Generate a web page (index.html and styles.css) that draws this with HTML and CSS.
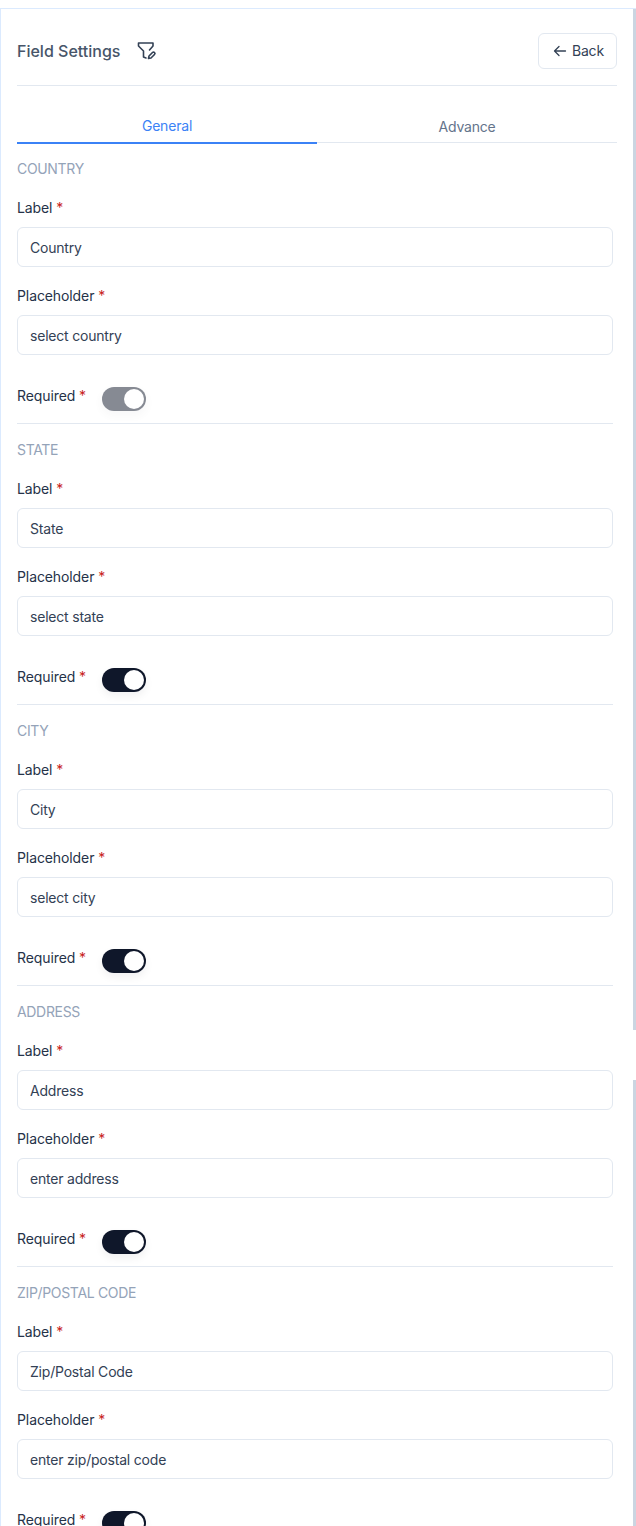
FILE: index.html
```html
<!DOCTYPE html>
<html lang="en">
<head>
    <meta charset="UTF-8">
    <title>Field Settings</title>
    <link rel="stylesheet" href="styles.css">
</head>
<body>
<div class="panel">
    <header class="panel-header">
        <div class="panel-title">
            <h2>Field Settings</h2>
            <svg class="filter-icon" width="20" height="20" viewBox="0 0 20 20" fill="none" stroke="#334155" stroke-width="1.6" stroke-linecap="round" stroke-linejoin="round">
                <path d="M9 17l-2.500-1v-6L1.500 5V2h14.500v3l-3.500 4"/>
                <path d="M11.500 17.500l.5-2.500 3.500-3.500a1.400 1.400 0 0 1 2 2L14 17z"/>
            </svg>
        </div>
        <button class="back-btn">
            <svg width="14" height="14" viewBox="0 0 14 14" fill="none" stroke="#334155" stroke-width="1.3" stroke-linecap="round" stroke-linejoin="round">
                <path d="M12.500 7h-11M6 2.500L1.500 7 6 11.500"/>
            </svg>
            Back
        </button>
    </header>

    <div class="tabs">
        <div class="tab active">General</div>
        <div class="tab">Advance</div>
    </div>

    <section class="field-group">
        <div class="group-name">COUNTRY</div>
        <label class="field-label">Label <span class="req">*</span></label>
        <input class="field-input" type="text" value="Country">
        <label class="field-label second">Placeholder <span class="req">*</span></label>
        <input class="field-input" type="text" value="select country">
        <div class="required-row">
            <span class="field-label">Required <span class="req">*</span></span>
            <span class="toggle disabled"><span class="knob"></span></span>
        </div>
    </section>

    <section class="field-group">
        <div class="group-name">STATE</div>
        <label class="field-label">Label <span class="req">*</span></label>
        <input class="field-input" type="text" value="State">
        <label class="field-label second">Placeholder <span class="req">*</span></label>
        <input class="field-input" type="text" value="select state">
        <div class="required-row">
            <span class="field-label">Required <span class="req">*</span></span>
            <span class="toggle"><span class="knob"></span></span>
        </div>
    </section>

    <section class="field-group">
        <div class="group-name">CITY</div>
        <label class="field-label">Label <span class="req">*</span></label>
        <input class="field-input" type="text" value="City">
        <label class="field-label second">Placeholder <span class="req">*</span></label>
        <input class="field-input" type="text" value="select city">
        <div class="required-row">
            <span class="field-label">Required <span class="req">*</span></span>
            <span class="toggle"><span class="knob"></span></span>
        </div>
    </section>

    <section class="field-group">
        <div class="group-name">ADDRESS</div>
        <label class="field-label">Label <span class="req">*</span></label>
        <input class="field-input" type="text" value="Address">
        <label class="field-label second">Placeholder <span class="req">*</span></label>
        <input class="field-input" type="text" value="enter address">
        <div class="required-row">
            <span class="field-label">Required <span class="req">*</span></span>
            <span class="toggle"><span class="knob"></span></span>
        </div>
    </section>

    <section class="field-group">
        <div class="group-name">ZIP/POSTAL CODE</div>
        <label class="field-label">Label <span class="req">*</span></label>
        <input class="field-input" type="text" value="Zip/Postal Code">
        <label class="field-label second">Placeholder <span class="req">*</span></label>
        <input class="field-input" type="text" value="enter zip/postal code">
        <div class="required-row">
            <span class="field-label">Required <span class="req">*</span></span>
            <span class="toggle"><span class="knob"></span></span>
        </div>
    </section>
</div>

<!-- scrollbar thumbs over the panel edge -->
<div class="scroll-thumb upper"></div>
<div class="scroll-thumb lower"></div>
</body>
</html>
```

FILE: styles.css
```css
html, body {
    height: 1526px;
    overflow: hidden;
}
body {
    font-family: Inter, "Liberation Sans", sans-serif;
    font-size: 14px;
    line-height: 20px;
    letter-spacing: -0.2px;
    margin: 0;
    padding: 0;
    background-color: #fff;
    color: #334155;
    position: relative;
}
.panel {
    margin-top: 8px;
    border-top: 1px solid #dbeafe;
    border-left: 1px solid #dbeafe;
    padding: 24px 19px 0 16px;
}
.panel-header {
    display: flex;
    justify-content: space-between;
    align-items: center;
    padding-bottom: 16px;
    border-bottom: 1px solid #e2e8f0;
}
.panel-title {
    display: flex;
    align-items: center;
    gap: 17px;
}
.panel-title h2 {
    margin: 0;
    font-size: 16px;
    font-weight: 500;
    letter-spacing: 0;
    color: #475569;
}
.filter-icon {
    display: block;
}
.back-btn {
    display: flex;
    align-items: center;
    gap: 5px;
    height: 36px;
    width: 79px;
    padding: 0 0 1px 14px;
    background-color: #fff;
    border: 1px solid #e2e8f0;
    border-radius: 6px;
    font-family: inherit;
    font-size: 14px;
    letter-spacing: inherit;
    color: #334155;
}
.tabs {
    display: flex;
    margin-top: 24px;
    border-bottom: 1px solid #e2e8f0;
}
.tab {
    flex: 1;
    text-align: center;
    height: 32px;
    padding-top: 7px;
    box-sizing: border-box;
    color: #64748b;
}
.tab.active {
    color: #3b82f6;
    border-bottom: 2px solid #3b82f6;
    margin-bottom: -2px;
    height: 34px;
    padding-top: 6px;
}
.field-group {
    width: 596px;
    padding-top: 16px;
    padding-bottom: 12px;
    border-bottom: 1px solid #e2e8f0;
}
.field-group:last-child {
    border-bottom: none;
}
.group-name {
    color: #94a3b8;
    letter-spacing: -0.33px;
    margin-bottom: 19px;
}
.field-label {
    display: block;
    color: #253248;
    letter-spacing: -0.1px;
    margin-bottom: 9px;
}
.field-label.second {
    margin-top: 19px;
    margin-bottom: 9px;
}
.req {
    color: #c81e1e;
}
.field-input {
    display: block;
    box-sizing: border-box;
    width: 100%;
    height: 40px;
    padding: 0 12px;
    border: 1px solid #e2e8f0;
    border-radius: 6px;
    font-family: inherit;
    font-size: 14px;
    letter-spacing: inherit;
    color: #334155;
    background-color: #fff;
}
.required-row {
    display: flex;
    align-items: flex-start;
    margin-top: 32px;
}
.required-row .field-label {
    margin: -1px 0 0;
    width: 85px;
}
.toggle {
    display: block;
    position: relative;
    width: 44px;
    height: 24px;
    border-radius: 12px;
    background-color: #0f172a;
    box-shadow: 0 4px 8px rgba(15, 23, 42, 0.06);
}
.toggle.disabled {
    opacity: 0.5;
}
.knob {
    position: absolute;
    top: 2px;
    right: 2px;
    width: 20px;
    height: 20px;
    border-radius: 50%;
    background-color: #fff;
}
.scroll-thumb {
    position: absolute;
    right: 0;
    width: 3px;
    background-color: #cbd5e1;
}
.scroll-thumb.upper {
    top: 9px;
    height: 1021px;
}
.scroll-thumb.lower {
    top: 1080px;
    height: 446px;
}
```
